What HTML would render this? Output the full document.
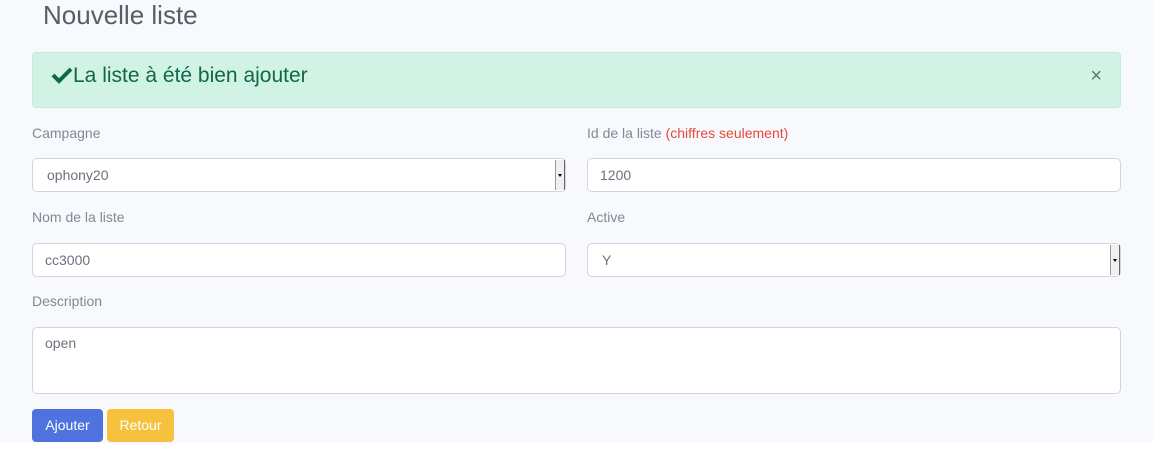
<!DOCTYPE html>
<html><head><meta charset="utf-8"><style>
body{margin:0;width:1153px;height:450px;background:#fff;font-family:"Liberation Sans",sans-serif;overflow:hidden}
.bg{position:absolute;left:0;top:0;width:1153px;height:443px;background:#f8f9fc}
.a{position:absolute}
h1{position:absolute;left:43px;top:0;margin:0;font-size:26px;font-weight:normal;color:#5a5c69;line-height:30px}
.alert{left:32px;top:52px;width:1087px;height:54px;background:#d1f3e6;border:1px solid #bdeedb;border-radius:4px;color:#0f6848;font-size:21px;line-height:46px}
.lbl{font-size:14px;color:#858796}
.in{background:#fff;border:1px solid #d1d3e2;border-radius:5px;font-size:14px;color:#6e707e;box-sizing:border-box;padding-left:14px}
.arr{position:absolute;right:0;top:1px;width:8px;bottom:1px;background:#f0f0f0;border-left:1px solid #999;border-right:1px solid #666}
.arr:after{content:"";position:absolute;left:2px;top:14px;border:2px solid transparent;border-top:3px solid #000}
.btn{top:409px;height:33px;border-radius:4px;color:#fff;font-size:14px;line-height:33px;text-align:center}
</style></head><body>
<div class="bg"></div>
<h1>Nouvelle liste</h1>
<div class="a alert"><span style="position:absolute;left:18px;top:0"><svg width="22" height="18" viewBox="0 0 22 18" style="vertical-align:-2px"><path d="M2 9 L8 15 L20 3" stroke="#0f6848" stroke-width="4" fill="none"/></svg>La liste à été bien ajouter</span><span style="position:absolute;right:18px;top:0;font-size:20px;color:#5a7a6d">×</span></div>
<div class="a lbl" style="left:32px;top:125px">Campagne</div>
<div class="a lbl" style="left:587px;top:125px">Id de la liste <span style="color:#e74a3b;font-size:14px">(chiffres seulement)</span></div>
<div class="a in" style="left:32px;top:158px;width:534px;height:34px;line-height:32px">ophony20<div class="arr"></div></div>
<div class="a in" style="left:587px;top:158px;width:534px;height:34px;line-height:32px;padding-left:12px">1200</div>
<div class="a lbl" style="left:32px;top:209px">Nom de la liste</div>
<div class="a lbl" style="left:587px;top:209px">Active</div>
<div class="a in" style="left:32px;top:243px;width:534px;height:34px;line-height:32px;padding-left:12px">cc3000</div>
<div class="a in" style="left:587px;top:243px;width:534px;height:34px;line-height:32px">Y<div class="arr"></div></div>
<div class="a lbl" style="left:32px;top:293px">Description</div>
<div class="a in" style="left:32px;top:327px;width:1089px;height:67px;padding-left:12px;padding-top:7px">open</div>
<div class="a btn" style="left:32px;width:71px;background:#4e73df">Ajouter</div>
<div class="a btn" style="left:107px;width:67px;background:#f6c23e">Retour</div>
</body></html>
